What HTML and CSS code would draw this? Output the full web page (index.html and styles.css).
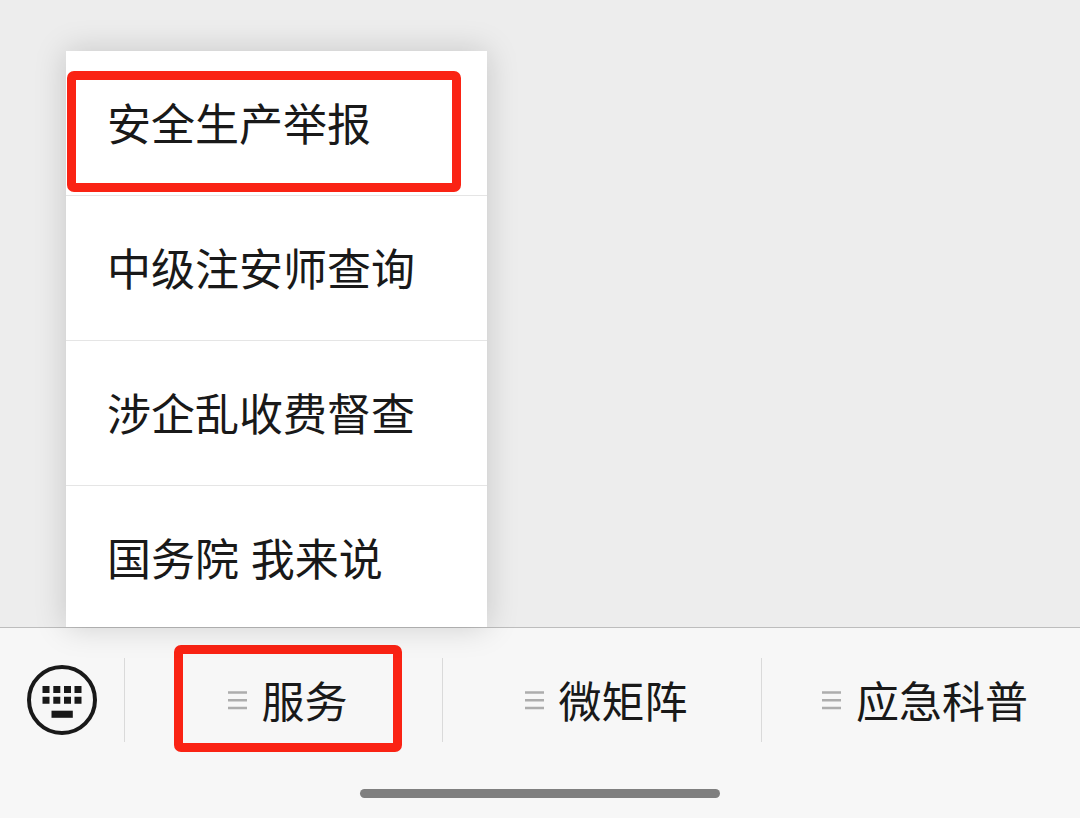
FILE: index.html
```html
<!DOCTYPE html>
<html lang="zh-CN">
<head>
    <meta charset="UTF-8">
    <meta name="viewport" content="width=device-width, initial-scale=1.0">
    <title>服务</title>
    <link rel="stylesheet" href="styles.css">
</head>
<body>
    <div class="screen">
        <main class="chat"></main>

        <footer class="footer">
            <nav class="menu-bar">
                <button class="keyboard-btn" aria-label="键盘">
                    <svg width="70" height="70" viewBox="0 0 70 70" fill="#191919">
                        <circle cx="35" cy="35" r="33" fill="none" stroke="#191919" stroke-width="4"/>
                        <path d="M15.5 21h7v7h-7zM26.300 21h7v7h-7zM37 21h7v7h-7zM47.500 21h7v7h-7z"/>
                        <path d="M15.500 31.700h7v7h-7zM26.300 31.700h7v7h-7zM37 31.700h7v7h-7zM47.500 31.700h7v7h-7z"/>
                        <path d="M24.500 45.700h21.300v7.100H24.500z"/>
                    </svg>
                </button>
                <div class="tab tab-first">
                    <svg class="lines" viewBox="0 0 19 19"><path d="M0 1.500h19M0 9.300h19M0 17h19"/></svg>
                    <span>服务</span>
                    <div class="highlight highlight-tab"></div>
                </div>
                <div class="tab">
                    <svg class="lines" viewBox="0 0 19 19"><path d="M0 1.500h19M0 9.300h19M0 17h19"/></svg>
                    <span>微矩阵</span>
                </div>
                <div class="tab">
                    <svg class="lines" viewBox="0 0 19 19"><path d="M0 1.500h19M0 9.300h19M0 17h19"/></svg>
                    <span>应急科普</span>
                </div>
            </nav>
            <div class="home-indicator"></div>
        </footer>

        <ul class="popup">
            <li>安全生产举报<div class="highlight highlight-item"></div></li>
            <li>中级注安师查询</li>
            <li>涉企乱收费督查</li>
            <li>国务院 我来说</li>
        </ul>
    </div>
</body>
</html>
```
FILE: styles.css
```css
* {
    box-sizing: border-box;
}

body {
    margin: 0;
    font-family: "Noto Sans CJK SC", sans-serif;
    color: #191919;
}

.screen {
    position: relative;
    display: flex;
    flex-direction: column;
    width: 1080px;
    height: 818px;
    overflow: hidden;
    background: #ededed;
}

.chat {
    flex: 1;
}

/* popup menu above the first tab */
.popup {
    position: absolute;
    left: 66px;
    bottom: 191px;
    width: 421px;
    margin: 0;
    padding: 0;
    list-style: none;
    background: #fff;
    box-shadow: 0 0 30px rgba(0, 0, 0, 0.17);
}

.popup li {
    position: relative;
    display: flex;
    align-items: center;
    height: 145px;
    padding: 0 0 2px 41px;
    border-bottom: 1px solid #e5e5e5;
    font-size: 44px;
    line-height: 64px;
    white-space: nowrap;
    word-spacing: 2px;
}

.popup li:last-child {
    height: 141px;
    padding-bottom: 0;
    border-bottom: none;
}

/* bottom bar */
.footer {
    height: 191px;
    border-top: 1px solid #bdbdbd;
    background: #f7f7f7;
}

.menu-bar {
    display: flex;
    align-items: center;
    height: 144px;
}

.keyboard-btn {
    width: 124px;
    height: 70px;
    padding: 0 0 0 27px;
    border: none;
    background: none;
    text-align: left;
}

.keyboard-btn svg {
    display: block;
}

.tab {
    position: relative;
    flex: 1;
    display: flex;
    align-items: center;
    justify-content: center;
    gap: 15px;
    height: 84px;
    padding-left: 8px;
    border-left: 1px solid #dadada;
    font-size: 43px;
    line-height: 62px;
    white-space: nowrap;
}

.tab-first {
    flex: 0 0 318px;
}

.tab span {
    padding-bottom: 3px;
}

.lines {
    width: 19px;
    height: 19px;
    fill: none;
    stroke: #adadad;
    stroke-width: 2.5;
}

.home-indicator {
    width: 360px;
    height: 9px;
    margin: 17px auto 0;
    border-radius: 5px;
    background: #7f7f7f;
}

/* red marker frames */
.highlight {
    position: absolute;
    border: 9px solid #fa2314;
    border-radius: 7px;
}

.highlight-item {
    left: 1px;
    top: 20px;
    width: 394px;
    height: 121px;
}

.highlight-tab {
    left: 49px;
    top: -13px;
    width: 228px;
    height: 107px;
}
```
